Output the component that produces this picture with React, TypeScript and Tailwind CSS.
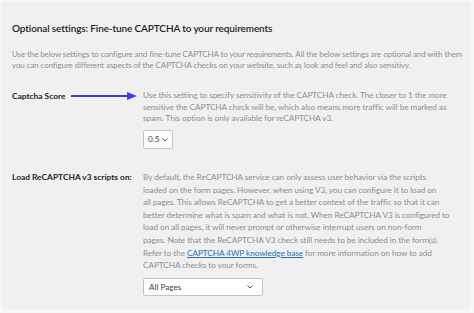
export default function App() {
  return (
    <div className="w-[474px] h-[313px] bg-[#f6f6f7] p-[2px] pr-[4px] pb-[4px] overflow-hidden" style={{ fontFamily: 'Lato, "Liberation Sans", Arial, sans-serif' }}>
      <div className="h-full bg-[#f0f0f1] pl-[10px] pr-[6px] pt-[19px]">
        {/* Section header */}
        <h2 className="text-[10px] tracking-[-0.12px] font-semibold text-[#1d2327] leading-[14px] whitespace-nowrap">
          Optional settings: Fine-tune CAPTCHA to your requirements
        </h2>
        <p className="mt-[14px] text-[8px] tracking-[-0.1px] leading-[11px] text-[#8c8f94] whitespace-nowrap">
          Use the below settings to configure and fine-tune CAPTCHA to your requirements. All the below settings are optional and with them
          <br />
          you can configure different aspects of the CAPTCHA checks on your website, such as look and feel and also sensitivy.
        </p>

        {/* Captcha score */}
        <div className="mt-[19px] grid grid-cols-[131px_1fr]">
          <div className="flex items-start h-[12px]">
            <span className="text-[8.4px] font-bold text-[#1d2327] leading-[12px]">Captcha Score</span>
            <svg width="68" height="12" viewBox="0 0 68 12" className="ml-[6px] shrink-0">
              <line x1="0" y1="6" x2="58" y2="6" stroke="#3b3fd9" strokeWidth="2" />
              <polygon points="56,2 66,6 56,10" fill="#3b3fd9" />
            </svg>
          </div>
          <div>
            <p className="text-[8.2px] tracking-[-0.05px] leading-[11.7px] text-[#8c8f94] whitespace-nowrap">
              Use this setting to specify sensitivity of the CAPTCHA check. The closer to 1 the more
              <br />
              sensitive the CAPTCHA check will be, which also means more traffic will be marked as
              <br />
              spam. This option is only available for reCAPTCHA v3.
            </p>
            <div className="mt-[5px] w-[30px] h-[19px] bg-white border border-[#c3c4c7] rounded-[2px] flex items-center justify-between px-[4px]">
              <span className="text-[8.2px] text-[#3c434a]">0.5</span>
              <svg width="6" height="4" viewBox="0 0 6 4">
                <polyline points="0.5,0.5 3,3 5.5,0.5" fill="none" stroke="#3c434a" strokeWidth="0.9" />
              </svg>
            </div>
          </div>
        </div>

        {/* Load scripts on */}
        <div className="mt-[22px] grid grid-cols-[131px_1fr]">
          <p className="text-[8.4px] font-bold text-[#1d2327] leading-[12.6px] whitespace-nowrap">Load ReCAPTCHA v3 scripts on:</p>
          <div>
            <p className="text-[8.2px] tracking-[-0.05px] leading-[12.6px] text-[#8c8f94] whitespace-nowrap">
              By default, the ReCAPTCHA service can only assess user behavior via the scripts
              <br />
              loaded on the form pages. However, when using V3, you can configure it to load on
              <br />
              all pages. This allows ReCAPTCHA to get a better context of the traffic so that it can
              <br />
              better determine what is spam and what is not. When ReCAPTCHA V3 is configured to
              <br />
              load on all pages, it will never prompt or otherwise interrupt users on non-form
              <br />
              pages. Note that the ReCAPTCHA V3 check still needs to be included in the form(s).
              <br />
              Refer to the <a className="text-[#2271b1] underline">CAPTCHA 4WP knowledge base</a> for more information on how to add
              <br />
              CAPTCHA checks to your forms.
            </p>
            <div className="mt-[6px] w-[120px] h-[18px] bg-white border border-[#c3c4c7] rounded-[2px] flex items-center justify-between pl-[5px] pr-[9px]">
              <span className="text-[8.2px] text-[#3c434a]">All Pages</span>
              <svg width="6" height="4" viewBox="0 0 6 4">
                <polyline points="0.5,0.5 3,3 5.5,0.5" fill="none" stroke="#3c434a" strokeWidth="0.9" />
              </svg>
            </div>
          </div>
        </div>
      </div>
    </div>
  );
}
